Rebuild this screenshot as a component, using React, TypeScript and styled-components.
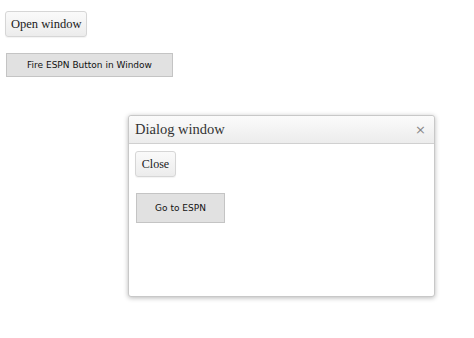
import React from "react";
import styled, { createGlobalStyle } from "styled-components";

const Global = createGlobalStyle`
  html, body { margin: 0; padding: 0; background: #fff; }
  body { width: 474px; height: 338px; overflow: hidden; position: relative; }
`;

const Page = styled.div`
  display: flex;
  flex-direction: column;
  align-items: flex-start;
  padding: 11px 0 0 5px;
`;

const GlossButton = styled.button`
  font-family: "Liberation Serif", serif;
  font-size: 12.5px;
  color: #1a1a1a;
  height: 26px;
  padding: 0 5px;
  border: 1px solid #d6d6d6;
  border-radius: 3px;
  background: linear-gradient(#fafafa, #ececec);
  box-shadow: 0 1px 1px rgba(0, 0, 0, 0.05);
  cursor: pointer;
`;

const FlatButton = styled.button<{ $w: number; $h: number }>`
  font-family: "DejaVu Sans", sans-serif;
  font-size: 9px;
  color: #111;
  width: ${(p) => p.$w}px;
  height: ${(p) => p.$h}px;
  margin: ${(p) => (p.$h > 26 ? "0 0 0 1px" : "16px 0 0 1px")};
  border: 1px solid #c4c4c4;
  background: #e1e1e1;
  padding: 0;
`;

const Dialog = styled.div`
  position: absolute;
  left: 128px;
  top: 115px;
  width: 305px;
  height: 180px;
  border: 1px solid #c8c8c8;
  border-radius: 3px;
  background: #fff;
  box-shadow: 0 1px 5px rgba(0, 0, 0, 0.28);
  display: flex;
  flex-direction: column;
`;

const Header = styled.div`
  height: 27px;
  border-bottom: 1px solid #d0d0d0;
  background: linear-gradient(#fbfbfb, #ececec);
  border-radius: 3px 3px 0 0;
  display: flex;
  align-items: center;
  justify-content: space-between;
  padding: 0 8px 0 6px;
`;

const Title = styled.span`
  font-family: "Liberation Serif", serif;
  font-size: 14.5px;
  color: #333;
`;

const CloseX = styled.span`
  font-family: "DejaVu Sans", sans-serif;
  font-size: 13px;
  color: #888;
`;

const Body = styled.div`
  display: flex;
  flex-direction: column;
  align-items: flex-start;
  gap: 16px;
  padding: 7px 0 0 6px;
`;

const SmallGloss = styled(GlossButton)`
  font-size: 12px;
  width: 41px;
  padding: 0;
`;

export default function App() {
  return (
    <>
      <Global />
      <Page>
        <GlossButton>Open window</GlossButton>
        <FlatButton $w={167} $h={24}>Fire ESPN Button in Window</FlatButton>
      </Page>
      <Dialog>
        <Header>
          <Title>Dialog window</Title>
          <CloseX>×</CloseX>
        </Header>
        <Body>
          <SmallGloss>Close</SmallGloss>
          <FlatButton $w={89} $h={30}>Go to ESPN</FlatButton>
        </Body>
      </Dialog>
    </>
  );
}
